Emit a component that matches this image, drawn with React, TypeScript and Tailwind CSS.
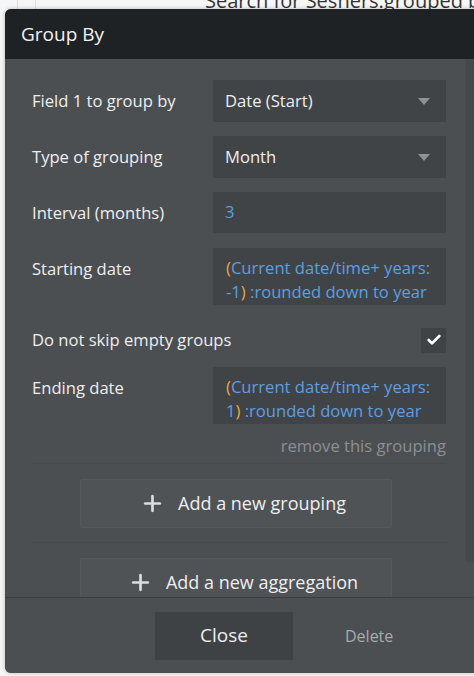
import { Check, Plus } from 'lucide-react';

const font = { fontFamily: '"Open Sans", "Liberation Sans", sans-serif' };

function Caret() {
  return (
    <svg width="12" height="7" viewBox="0 0 12 7" className="shrink-0">
      <path d="M0 0 L12 0 L6 7 Z" fill="#8f9396" />
    </svg>
  );
}

function Row({ label, children }: { label: string; children: React.ReactNode }) {
  return (
    <div className="flex items-start">
      <div className="flex h-[42px] w-[181px] shrink-0 items-center text-[16.6px] text-[#eeeeee]">{label}</div>
      {children}
    </div>
  );
}

function Dropdown({ value }: { value: string }) {
  return (
    <div className="flex h-[42px] w-[233px] items-center justify-between bg-[#404447] pl-[12px] pr-[16px] text-[16.6px] text-[#eeeeee]">
      <span>{value}</span>
      <Caret />
    </div>
  );
}

function Expression({ value }: { value: string }) {
  return (
    <div className="h-[57px] w-[233px] bg-[#404447] pl-[13px] pr-[4px] pt-[8px] text-[16.6px] leading-[24px] whitespace-nowrap text-[#5e9ee0]">
      <span className="text-[#e9a83c]">(</span>Current date/time+ years:
      <br />
      {value}
      <span className="text-[#e9a83c]">)</span> :rounded down to year
    </div>
  );
}

function AddButton({ label }: { label: string }) {
  return (
    <div className="flex justify-center pr-[6px]">
      <div className="flex h-[49px] w-[312px] items-center justify-center gap-[13px] rounded-[2px] border border-[#55595c] bg-[#4f5356] pl-[14px] text-[18px] text-[#eeeeee]">
        <Plus size={25} strokeWidth={2.6} color="#dcdcdc" />
        <span>{label}</span>
      </div>
    </div>
  );
}

export default function App() {
  return (
    <div className="relative h-[676px] w-[474px] overflow-hidden bg-[#f6f6f6]" style={font}>
      {/* page behind the modal */}
      <div className="absolute left-[17px] top-0 h-[9px] w-px bg-[#dddddd]" />
      <div className="absolute left-[35px] top-0 h-[9px] w-px bg-[#dddddd]" />
      <div className="absolute left-[205px] top-[-14px] text-[20px] whitespace-nowrap text-[#333333]">
        Search for Seshers:grouped by
      </div>

      {/* modal */}
      <div className="absolute left-[5px] top-[9px] flex h-[664px] w-[480px] flex-col overflow-hidden rounded-[6px] bg-[#4b4f52] shadow-[0_0_4px_rgba(0,0,0,0.25)]">
        <div className="flex h-[50px] shrink-0 items-center bg-[#1f2225] pl-[16px] text-[19px] text-[#f2f2f2]">
          Group By
        </div>

        <div className="flex min-h-0 flex-1 overflow-hidden">
          <div className="w-[460px] shrink-0 pl-[27px] pr-[19px] pt-[21px]">
            <div className="flex flex-col gap-[14px]">
              <Row label="Field 1 to group by">
                <Dropdown value="Date (Start)" />
              </Row>
              <Row label="Type of grouping">
                <Dropdown value="Month" />
              </Row>
              <Row label="Interval (months)">
                <div className="flex h-[41px] w-[233px] items-center bg-[#404447] pl-[12px] text-[16.6px] text-[#5e9ee0]">3</div>
              </Row>
              <Row label="Starting date">
                <Expression value="-1" />
              </Row>
            </div>

            <div className="mt-[14px] flex h-[42px] items-center justify-between text-[16.6px] text-[#eeeeee]">
              <span>Do not skip empty groups</span>
              <div className="flex h-[25px] w-[25px] items-center justify-center bg-[#3f4346]">
                <Check size={16} strokeWidth={4} color="#ffffff" />
              </div>
            </div>

            <div className="mt-[6px]">
              <Row label="Ending date">
                <Expression value="1" />
              </Row>
            </div>

            <div className="mt-[11px] text-right text-[16.6px] leading-[22px] text-[#8b8f92]">remove this grouping</div>

            <div className="mt-[6px] h-px bg-[#454a4d]" />
            <div className="mt-[15px]">
              <AddButton label="Add a new grouping" />
            </div>
            <div className="mt-[14px] h-px bg-[#454a4d]" />
            <div className="mt-[15px]">
              <AddButton label="Add a new aggregation" />
            </div>
          </div>
          <div className="w-[9px] shrink-0">
            <div className="h-[503px] bg-[#45494c]" />
          </div>
        </div>

        <div className="flex h-[76px] shrink-0 items-center border-t border-[#3a3d40] bg-[#4b4f52] pl-[150px]">
          <div className="flex h-[48px] w-[138px] items-center justify-center bg-[#3e4245] text-[19px] text-[#eeeeee]">
            Close
          </div>
          <div className="ml-[52px] text-[16px] text-[#a7aaad]">Delete</div>
        </div>
      </div>
    </div>
  );
}
